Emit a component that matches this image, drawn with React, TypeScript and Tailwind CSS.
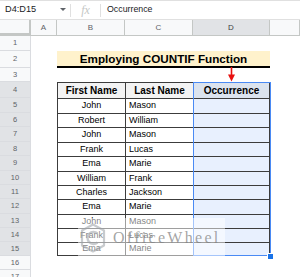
import React from "react";

const font = { fontFamily: '"Liberation Sans", Arial, sans-serif' };

const data: [string, string][] = [
  ["John", "Mason"],
  ["Robert", "William"],
  ["John", "Mason"],
  ["Frank", "Lucas"],
  ["Ema", "Marie"],
  ["William", "Frank"],
  ["Charles", "Jackson"],
  ["Ema", "Marie"],
  ["John", "Mason"],
  ["Frank", "Lucas"],
  ["Ema", "Marie"],
];
const dataHeights = ["h-[15px]", "h-[14px]", "h-[15px]", "h-[14px]", "h-[15px]", "h-[14px]", "h-[14px]", "h-[15px]", "h-[14px]", "h-[14px]", "h-[14px]"];

function RowHead({ n, sel }: { n: number; sel?: boolean }) {
  return (
    <div
      className={`w-[31px] shrink-0 flex items-center justify-center border-b border-r border-[#dadce0] text-[7.5px] text-[#5f6368] ${
        sel ? "bg-[#e1e3e6]" : "bg-[#f8f9fa]"
      }`}
    >
      {n}
    </div>
  );
}

export default function App() {
  return (
    <div className="relative w-[300px] h-[277px] overflow-hidden bg-white" style={font}>
      {/* formula bar */}
      <div className="h-[20px] flex items-center border-t border-b border-[#e0e0e0] bg-white">
        <div className="w-[70px] shrink-0 flex items-center pl-[5px] pr-[4px] text-[9.2px] text-[#202124]">
          <span className="flex-1">D4:D15</span>
          <svg width="6" height="4" viewBox="0 0 6 4">
            <path d="M0 0 L6 0 L3 3 Z" fill="#5f6368" />
          </svg>
        </div>
        <div className="w-px h-[13px] bg-[#e0e0e0]" />
        <div className="w-[29px] shrink-0 flex items-center justify-center">
          <span className="text-[12px] italic text-[#c4c7c5]" style={{ fontFamily: '"Liberation Serif", serif' }}>
            fx
          </span>
        </div>
        <div className="w-px h-[13px] bg-[#e0e0e0]" />
        <div className="pl-[6px] text-[8.8px] text-[#202124]">Occurrence</div>
      </div>

      {/* column header */}
      <div className="flex h-[16px]">
        <div className="w-[31px] shrink-0 bg-[#f8f9fa] border-r-[2px] border-b-[3px] border-[#c4c7c5]" />
        {[
          ["A", "w-[26px]", false],
          ["B", "w-[68px]", false],
          ["C", "w-[68px]", false],
          ["D", "w-[77px]", true],
          ["", "flex-1", false],
        ].map(([l, w, s]) => (
          <div
            key={(l as string) + w}
            className={`${w} shrink-0 flex items-center justify-center border-r border-b border-[#c4c7c5] text-[8px] ${
              s ? "bg-[#e1e3e6] text-[#3c4043]" : "bg-[#f8f9fa] text-[#5f6368]"
            }`}
          >
            {l as string}
          </div>
        ))}
      </div>

      {/* row 1 */}
      <div className="flex h-[15px]">
        <RowHead n={1} />
      </div>
      {/* row 2 title */}
      <div className="flex h-[17px]">
        <RowHead n={2} />
        <div className="w-[26px] shrink-0" />
        <div className="w-[213px] shrink-0 bg-[#fff2cc] border-b-2 border-black flex items-center justify-center text-[11.7px] font-bold text-black">
          Employing COUNTIF Function
        </div>
      </div>
      {/* row 3 */}
      <div className="flex h-[14px]">
        <RowHead n={3} />
      </div>
      {/* row 4 header */}
      <div className="flex h-[16px]">
        <RowHead n={4} sel />
        <div className="w-[26px] shrink-0" />
        <div className="w-[68px] shrink-0 bg-[#f3f3f3] border-t border-l border-[#3c3c3c] flex items-center justify-center text-[10px] font-bold text-black">
          First Name
        </div>
        <div className="w-[68px] shrink-0 bg-[#f3f3f3] border-t border-l border-[#3c3c3c] flex items-center justify-center text-[10px] font-bold text-black">
          Last Name
        </div>
        <div className="w-[77px] shrink-0 bg-[#dbe3ee] border-t border-l border-r border-[#3c3c3c] flex items-center justify-center text-[10px] font-bold text-black">
          Occurrence
        </div>
      </div>
      {data.map(([f, l], i) => {
        const last = i === data.length - 1;
        const bb = last ? "border-b" : "";
        return (
          <div key={i} className={`flex ${dataHeights[i]}`}>
            <RowHead n={i + 5} sel />
            <div className="w-[26px] shrink-0" />
            <div className={`w-[68px] shrink-0 border-t border-l ${bb} border-[#3c3c3c] flex items-center justify-center text-[9px] text-black`}>
              {f}
            </div>
            <div className={`w-[68px] shrink-0 border-t border-l ${bb} border-[#3c3c3c] flex items-center pl-[3px] text-[9px] text-black`}>
              {l}
            </div>
            <div className={`w-[77px] shrink-0 border-t border-l border-r ${bb} border-[#3c3c3c] bg-[#e8f0fe]`} />
          </div>
        );
      })}
      <div className="flex h-[14px]">
        <RowHead n={16} />
      </div>
      <div className="flex h-[14px]">
        <RowHead n={17} />
      </div>

      {/* selection outline */}
      <div className="absolute left-[193px] top-[82px] w-[78px] h-[174px] border border-[#4a8af4]" />
      <div className="absolute left-[268px] top-[254px] w-[5px] h-[5px] bg-[#1a73e8] outline outline-1 outline-white" />

      {/* red arrow */}
      <svg className="absolute left-[227px] top-[67px]" width="9" height="15" viewBox="0 0 9 15">
        <line x1="4.5" y1="0" x2="4.5" y2="9" stroke="#e8100f" strokeWidth="1.6" />
        <path d="M1 7.5 L8 7.5 L4.5 14.5 Z" fill="#e8100f" />
      </svg>

      {/* watermark */}
      <div className="absolute left-[78px] top-[218px] w-[147px] h-[39px] bg-white/50 flex items-center">
        <svg className="ml-[2px]" width="26" height="30" viewBox="0 0 26 30">
          <path d="M13 1.5 L24 7.5 L24 22.5 L13 28.5 L2 22.5 L2 7.5 Z" fill="none" stroke="#9aa0a6" strokeOpacity="0.55" strokeWidth="2.2" strokeLinejoin="round" />
          <path d="M17.5 10.5 A6 6 0 1 0 17.5 19.5" fill="none" stroke="#9aa0a6" strokeOpacity="0.55" strokeWidth="2.4" />
        </svg>
        <span
          className="ml-[7px] text-[16px] tracking-[2.3px] text-[#7d7d7d]/70"
          style={{ fontFamily: '"Liberation Serif", "Times New Roman", serif' }}
        >
          OfficeWheel
        </span>
      </div>
    </div>
  );
}
